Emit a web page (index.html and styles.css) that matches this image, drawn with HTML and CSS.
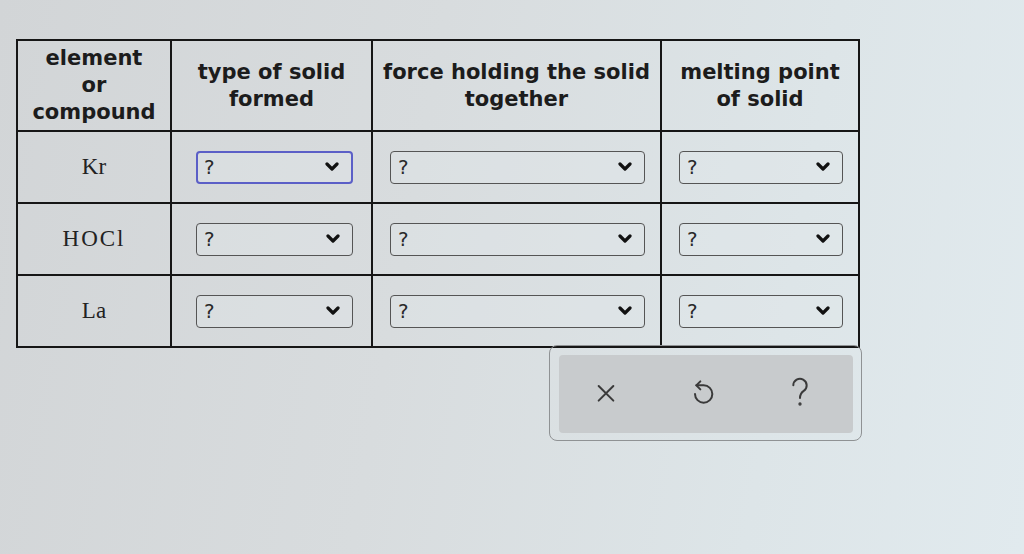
FILE: index.html
```html
<!DOCTYPE html>
<html>
<head>
<meta charset="utf-8">
<link rel="stylesheet" href="styles.css">
</head>
<body>
<div class="page">
  <div class="wrap">
    <table class="grid">
      <colgroup>
        <col class="c1"><col class="c2"><col class="c3"><col class="c4">
      </colgroup>
      <thead>
        <tr>
          <th>element<br>or<br>compound</th>
          <th>type of solid<br>formed</th>
          <th>force holding the solid<br>together</th>
          <th>melting point<br>of solid</th>
        </tr>
      </thead>
      <tbody>
        <tr>
          <td class="name">Kr</td>
          <td class="sel c2p"><div class="select focus"><span>?</span><svg class="chev" viewBox="0 0 14 10"><path d="M2 2 L7 7 L12 2"/></svg></div></td>
          <td class="sel"><div class="select"><span>?</span><svg class="chev" viewBox="0 0 14 10"><path d="M2 2 L7 7 L12 2"/></svg></div></td>
          <td class="sel"><div class="select"><span>?</span><svg class="chev" viewBox="0 0 14 10"><path d="M2 2 L7 7 L12 2"/></svg></div></td>
        </tr>
        <tr>
          <td class="name wide">HOCl</td>
          <td class="sel c2p"><div class="select"><span>?</span><svg class="chev" viewBox="0 0 14 10"><path d="M2 2 L7 7 L12 2"/></svg></div></td>
          <td class="sel"><div class="select"><span>?</span><svg class="chev" viewBox="0 0 14 10"><path d="M2 2 L7 7 L12 2"/></svg></div></td>
          <td class="sel"><div class="select"><span>?</span><svg class="chev" viewBox="0 0 14 10"><path d="M2 2 L7 7 L12 2"/></svg></div></td>
        </tr>
        <tr>
          <td class="name">La</td>
          <td class="sel c2p"><div class="select"><span>?</span><svg class="chev" viewBox="0 0 14 10"><path d="M2 2 L7 7 L12 2"/></svg></div></td>
          <td class="sel"><div class="select"><span>?</span><svg class="chev" viewBox="0 0 14 10"><path d="M2 2 L7 7 L12 2"/></svg></div></td>
          <td class="sel"><div class="select"><span>?</span><svg class="chev" viewBox="0 0 14 10"><path d="M2 2 L7 7 L12 2"/></svg></div></td>
        </tr>
      </tbody>
    </table>
    <div class="actions">
      <div class="actions-inner">
        <svg class="ico" viewBox="0 0 24 24"><path d="M6.5 7.5 L17.5 18.5 M17.5 7.5 L6.5 18.5"/></svg>
        <svg class="ico" viewBox="0 0 24 24"><path d="M10 4 L7 7 L10 10"/><path d="M7 7 H12.5 A6.5 6.5 0 1 1 6 13.5"/></svg>
        <svg class="ico q" viewBox="0 0 24 24"><path d="M7 7 A5 5 0 1 1 14.8 11.2 C12.6 12.8 12 14 12 16.5"/><circle cx="12" cy="21" r="0.5"/></svg>
      </div>
    </div>
  </div>
</div>
</body>
</html>
```

FILE: styles.css
```css
html, body {
  margin: 0;
  padding: 0;
}
body {
  width: 1024px;
  height: 554px;
  overflow: hidden;
  background: linear-gradient(100deg, #d2d5d7 0%, #d8dcde 40%, #dde5e8 75%, #e1eaee 100%);
  font-family: "DejaVu Sans", Verdana, sans-serif;
  color: #1a1a1a;
}
.page {
  padding: 39px 0 0 18px;
}
.wrap {
  width: 842px;
  display: flex;
  flex-direction: column;
  align-items: flex-end;
}
.grid {
  width: 842px;
  border-collapse: collapse;
  table-layout: fixed;
  border: 2px solid #161616;
}
.c1 { width: 154px; }
.c2 { width: 201px; }
.c3 { width: 289px; }
.c4 { width: 198px; }
.grid th, .grid td {
  border: 2px solid #161616;
  padding: 0;
  vertical-align: middle;
  text-align: center;
}
.grid th {
  height: 89px;
  font-weight: bold;
  font-size: 21px;
  line-height: 27px;
  color: #1c1c1c;
  white-space: nowrap;
}
.grid td {
  height: 70px;
}
.name {
  font-family: "Liberation Serif", "Times New Roman", serif;
  font-size: 23px;
  color: #222;
}
.name.wide {
  letter-spacing: 2px;
}
.sel {
  padding: 0 15px 0 17px !important;
}
.sel.c2p {
  padding: 0 18px 0 24px !important;
}
.select {
  height: 33px;
  border: 1px solid #555;
  border-radius: 4px;
  box-sizing: border-box;
  display: flex;
  align-items: center;
  justify-content: space-between;
  padding: 0 12px 0 7px;
  font-size: 20px;
  color: #2a2a2a;
  background: rgba(226, 232, 234, 0.35);
}
.select.focus {
  border: 2px solid #5b5fc7;
  padding-left: 6px;
}
.chev {
  width: 14px;
  height: 10px;
}
.chev path {
  fill: none;
  stroke: #111;
  stroke-width: 3.2;
  stroke-linecap: round;
  stroke-linejoin: round;
}
.actions {
  width: 313px;
  height: 96px;
  margin-top: -3px;
  margin-right: -2px;
  box-sizing: border-box;
  border: 1.5px solid #8f9294;
  border-radius: 8px;
  padding: 9px 8px 11px 9px;
}
.actions-inner {
  height: 100%;
  border-radius: 4px;
  background: #c8cbcd;
  display: flex;
  align-items: center;
  justify-content: space-between;
  padding: 0 37px 4px 31px;
}
.ico {
  width: 32px;
  height: 32px;
}
.ico path, .ico circle {
  fill: none;
  stroke: #3a3a3a;
  stroke-width: 1.5;
  stroke-linecap: round;
  stroke-linejoin: round;
}
```
